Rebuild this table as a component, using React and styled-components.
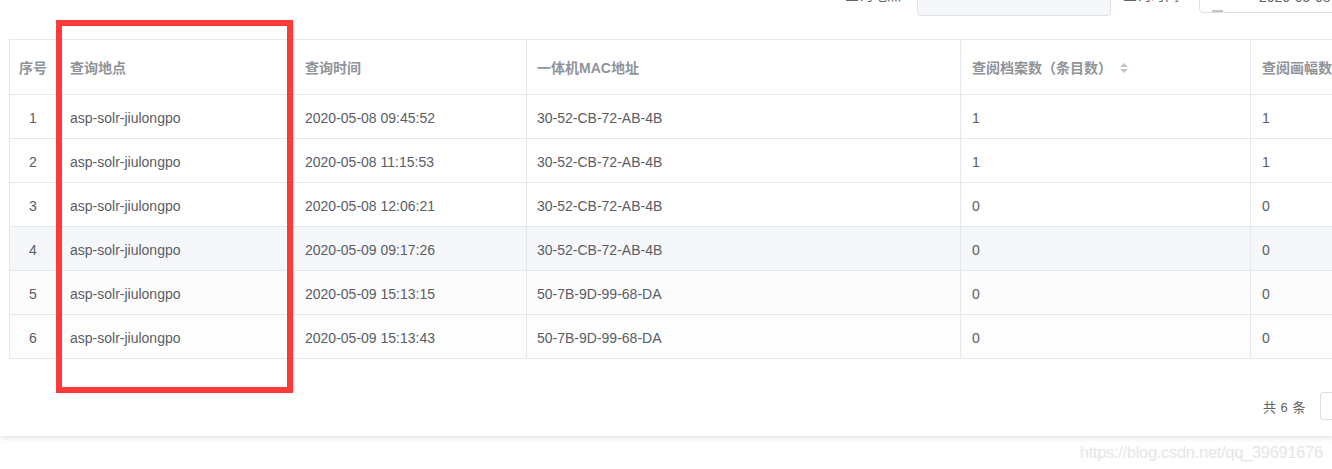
import React from "react";
import styled, { createGlobalStyle } from "styled-components";

const Global = createGlobalStyle`
  html, body { margin: 0; padding: 0; background: #fff; }
  body { font-family: "Liberation Sans", "Noto Sans CJK SC", Arial, sans-serif; }
`;

const Page = styled.div`
  position: relative;
  width: 1332px;
  height: 469px;
  overflow: hidden;
  background: #fff;
`;

const Card = styled.div`
  height: 436px;
  background: #fff;
  box-shadow: 0 2px 5px rgba(0, 0, 0, 0.12);
  display: flex;
  flex-direction: column;
  overflow: hidden;
`;

const FormRow = styled.div`
  height: 16px;
  overflow: hidden;
  display: flex;
  align-items: flex-end;
  padding-left: 845px;
  margin-bottom: 23px;
  white-space: nowrap;
`;

const Label = styled.span`
  font-size: 14px;
  color: #606266;
  line-height: 14px;
  margin-bottom: 14px;
  margin-right: ${(p) => p.$mr}px;
`;

const TextInput = styled.div`
  width: 194px;
  height: 32px;
  box-sizing: border-box;
  border: 1px solid #dcdfe6;
  border-radius: 4px;
  background: #f5f7fa;
  margin-right: 12px;
  flex-shrink: 0;
`;

const DateInput = styled.div`
  width: 260px;
  height: 32px;
  box-sizing: border-box;
  border: 1px solid #dcdfe6;
  border-radius: 4px;
  background: #fff;
  margin-bottom: 3px;
  flex-shrink: 0;
  display: flex;
  align-items: center;
  padding-left: 12px;
  font-size: 14px;
  color: #606266;
`;

const DateIcon = styled.span`
  width: 11px;
  height: 2px;
  background: #c0c4cc;
  margin-right: 36px;
  align-self: flex-end;
`;

const TableWrap = styled.div`
  padding-left: 9px;
  overflow: hidden;
`;

const Table = styled.table`
  border-collapse: collapse;
  table-layout: fixed;
  width: 1500px;
  font-size: 14px;
`;

const Th = styled.th`
  height: 55px;
  box-sizing: border-box;
  border: 1px solid #e3e8ee;
  text-align: ${(p) => (p.$center ? "center" : "left")};
  padding: 0 0 0 ${(p) => p.$pl || 0}px;
  color: #909399;
  font-weight: bold;
  white-space: nowrap;
`;

const Tr = styled.tr`
  background: ${(p) => p.$bg};
`;

const Td = styled.td`
  height: 44px;
  box-sizing: border-box;
  border: 1px solid #e3e8ee;
  text-align: ${(p) => (p.$center ? "center" : "left")};
  padding: 2px 0 0 ${(p) => p.$pl || 0}px;
  color: #5a5d63;
  white-space: nowrap;
`;

const SortIcon = styled.span`
  display: inline-flex;
  flex-direction: column;
  vertical-align: middle;
  margin-left: 8px;
  gap: 2px;
  position: relative;
  top: -1px;
`;

const Caret = styled.span`
  width: 0;
  height: 0;
  border-left: 4px solid transparent;
  border-right: 4px solid transparent;
  ${(p) => (p.$up ? "border-bottom: 4px solid #c0c4cc;" : "border-top: 4px solid #c0c4cc;")}
`;

const Pager = styled.div`
  margin-top: 33px;
  display: flex;
  align-items: center;
  padding-left: 1263px;
  white-space: nowrap;
`;

const Total = styled.span`
  font-size: 13px;
  color: #606266;
  margin-right: 14px;
  letter-spacing: 0.5px;
`;

const SizeBox = styled.div`
  width: 100px;
  height: 28px;
  box-sizing: border-box;
  border: 1px solid #dcdfe6;
  border-radius: 3px;
  flex-shrink: 0;
`;

const Watermark = styled.div`
  text-align: right;
  padding-right: 9px;
  margin-top: 7px;
  font-size: 16.5px;
  color: #e6e6e6;
  letter-spacing: -0.3px;
`;

const Highlight = styled.div`
  position: absolute;
  left: 56px;
  top: 20px;
  width: 237px;
  height: 373px;
  box-sizing: border-box;
  border: 6px solid #fb3a3a;
  pointer-events: none;
`;

const rows = [
  ["1", "2020-05-08 09:45:52", "30-52-CB-72-AB-4B", "1", "1"],
  ["2", "2020-05-08 11:15:53", "30-52-CB-72-AB-4B", "1", "1"],
  ["3", "2020-05-08 12:06:21", "30-52-CB-72-AB-4B", "0", "0"],
  ["4", "2020-05-09 09:17:26", "30-52-CB-72-AB-4B", "0", "0"],
  ["5", "2020-05-09 15:13:15", "50-7B-9D-99-68-DA", "0", "0"],
  ["6", "2020-05-09 15:13:43", "50-7B-9D-99-68-DA", "0", "0"],
];

const rowBg = ["#fff", "#fff", "#fff", "#f5f7fa", "#fcfcfd", "#fdfdfe"];
const pads = [0, 13, 13, 10, 11, 11];

export default function App() {
  return (
    <Page>
      <Global />
      <Card>
        <FormRow>
          <Label $mr={16}>查询地点</Label>
          <TextInput />
          <Label $mr={20}>查询时间</Label>
          <DateInput>
            <DateIcon />
            2020-05-08
          </DateInput>
        </FormRow>
        <TableWrap>
          <Table>
            <colgroup>
              <col style={{ width: 47 }} />
              <col style={{ width: 235 }} />
              <col style={{ width: 235 }} />
              <col style={{ width: 434 }} />
              <col style={{ width: 290 }} />
              <col style={{ width: 259 }} />
            </colgroup>
            <thead>
              <tr>
                <Th $center>序号</Th>
                <Th $pl={pads[1]}>查询地点</Th>
                <Th $pl={pads[2]}>查询时间</Th>
                <Th $pl={pads[3]}>一体机MAC地址</Th>
                <Th $pl={pads[4]}>
                  查阅档案数（条目数）
                  <SortIcon>
                    <Caret $up />
                    <Caret />
                  </SortIcon>
                </Th>
                <Th $pl={pads[5]}>查阅画幅数</Th>
              </tr>
            </thead>
            <tbody>
              {rows.map((r, i) => (
                <Tr key={r[0]} $bg={rowBg[i]}>
                  <Td $center>{r[0]}</Td>
                  <Td $pl={pads[1]}>asp-solr-jiulongpo</Td>
                  <Td $pl={pads[2]}>{r[1]}</Td>
                  <Td $pl={pads[3]}>{r[2]}</Td>
                  <Td $pl={pads[4]}>{r[3]}</Td>
                  <Td $pl={pads[5]}>{r[4]}</Td>
                </Tr>
              ))}
            </tbody>
          </Table>
        </TableWrap>
        <Pager>
          <Total>共 6 条</Total>
          <SizeBox />
        </Pager>
      </Card>
      <Watermark>https://blog.csdn.net/qq_39691676</Watermark>
      <Highlight />
    </Page>
  );
}
